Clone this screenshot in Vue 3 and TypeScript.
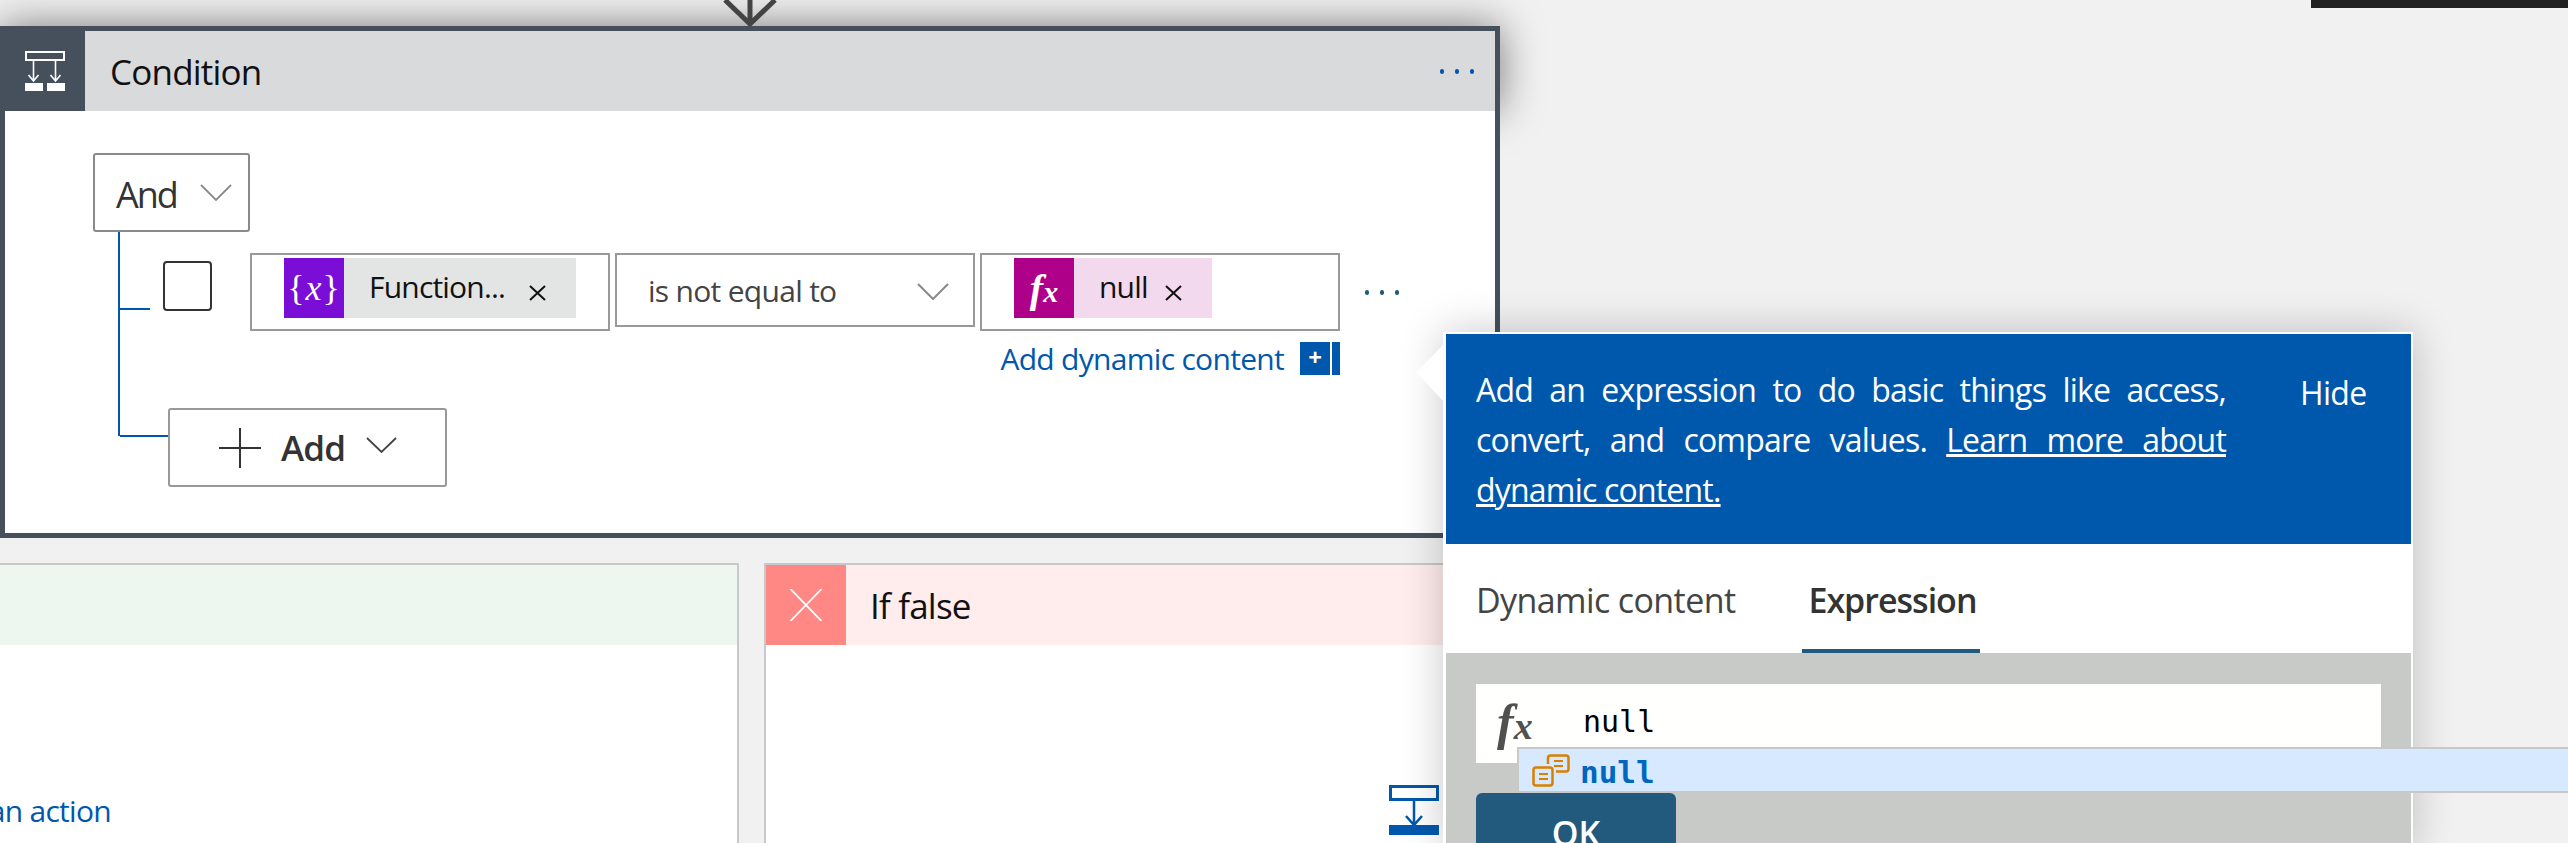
<script setup lang="ts">
const tabs: string[] = ['Dynamic content', 'Expression']
</script>

<template>
  <div class="page">
    <main class="flow">
      <svg class="down" width="60" height="26" viewBox="0 0 60 26">
        <path d="M30 0V24M5 0L30 24L55 0" fill="none" stroke="#444" stroke-width="5" />
      </svg>

      <section class="card">
        <header class="head">
          <div class="head-icon">
            <svg width="40" height="40" viewBox="0 0 40 40">
              <rect x="1" y="1" width="38" height="8" fill="none" stroke="#fff" stroke-width="2" />
              <path d="M8.5 9V30M3.5 24L8.5 30L13.500 24M30.500 9V30M25.500 24L30.500 30L35.500 24" fill="none" stroke="#fff" stroke-width="1.600" />
              <rect x="0" y="32" width="18" height="8" fill="#fff" />
              <rect x="22" y="32" width="18" height="8" fill="#fff" />
            </svg>
          </div>
          <span class="head-title">Condition</span>
          <span class="dots head-dots"><i></i><i></i><i></i></span>
        </header>

        <div class="body">
          <div class="and">
            <span>And</span>
            <svg width="32" height="17" viewBox="0 0 32 17"><path d="M1 1L16 16L31 1" fill="none" stroke="#8a8a8a" stroke-width="1.800" /></svg>
          </div>

          <div class="tree">
            <div class="row">
              <i class="stub"></i>
              <i class="check"></i>
              <div class="field field-a">
                <div class="token token-grey">
                  <span class="tk-icon tk-purple"><span>{<em>x</em>}</span></span>
                  <span class="tk-text tk-fn">Function...</span>
                  <svg class="tk-x" width="17" height="16" viewBox="0 0 17 16"><path d="M1 1L16 15M16 1L1 15" stroke="#111" stroke-width="2" /></svg>
                </div>
              </div>
              <div class="select">
                <span>is not equal to</span>
                <svg width="32" height="17" viewBox="0 0 32 17"><path d="M1 1L16 16L31 1" fill="none" stroke="#8a8a8a" stroke-width="2" /></svg>
              </div>
              <div class="value-col">
                <div class="field field-b">
                  <div class="token token-pink">
                    <span class="tk-icon tk-magenta"><span><em>f</em><em class="fx-x">x</em></span></span>
                    <span class="tk-text tk-null">null</span>
                    <svg class="tk-x" width="17" height="16" viewBox="0 0 17 16"><path d="M1 1L16 15M16 1L1 15" stroke="#111" stroke-width="2" /></svg>
                  </div>
                </div>
                <div class="dyn">
                  <span>Add dynamic content</span>
                  <span class="dyn-plus">+</span>
                  <i class="dyn-bar"></i>
                </div>
              </div>
              <span class="dots row-dots"><i></i><i></i><i></i></span>
            </div>

            <div class="add-row">
              <i class="add-stub"></i>
              <div class="add-btn">
                <svg width="42" height="40" viewBox="0 0 42 40"><path d="M21 0V40M0 20H42" stroke="#333" stroke-width="2" /></svg>
                <span>Add</span>
                <svg width="31" height="16" viewBox="0 0 31 16"><path d="M1 1L15.500 15L30 1" fill="none" stroke="#444" stroke-width="1.800" /></svg>
              </div>
            </div>
          </div>
        </div>
      </section>

      <div class="branches">
        <section class="branch branch-true">
          <div class="branch-head true-head"></div>
          <div class="true-body"><span>Add an action</span></div>
        </section>
        <section class="branch branch-false">
          <div class="branch-head false-head">
            <div class="false-icon">
              <svg width="32" height="32" viewBox="0 0 32 32"><path d="M0.500 0L31.500 32M31.500 0L0.500 32" stroke="#fff" stroke-width="1.800" /></svg>
            </div>
            <span>If false</span>
          </div>
          <div class="false-body">
            <svg width="50" height="50" viewBox="0 0 50 50">
              <rect x="1.500" y="1.500" width="47" height="13" fill="none" stroke="#0058ad" stroke-width="3" />
              <path d="M25 15V39M17 31L25 40L33 31" fill="none" stroke="#0058ad" stroke-width="2.500" />
              <rect x="0" y="40" width="50" height="10" fill="#0058ad" />
            </svg>
          </div>
        </section>
      </div>
    </main>

    <aside class="side"><div class="topbar"></div></aside>

    <div class="popup">
      <svg class="notch" width="30" height="60" viewBox="0 0 30 60"><path d="M30 0L1 29.500L30 60Z" fill="#fff" /></svg>
      <div class="info">
        <p class="info-text">Add an expression to do basic things like access, convert, and compare values. <a>Learn more about dynamic content.</a></p>
        <span class="hide">Hide</span>
      </div>
      <nav class="tabs">
        <span v-for="(t, i) in tabs" :key="t" class="tab" :class="{ active: i === 1 }">{{ t }}</span>
      </nav>
      <div class="panel">
        <div class="expr">
          <span class="expr-fx"><em>f</em><em class="fx-x">x</em></span>
          <span class="expr-text">null</span>
        </div>
        <button class="ok">OK</button>
      </div>
    </div>

    <div class="suggest">
      <svg width="38" height="33" viewBox="0 0 38 33">
        <rect x="1.500" y="13.500" width="19" height="18" rx="2.500" fill="none" stroke="#d98000" stroke-width="2.500" />
        <path d="M7 20H16M7 25H16" stroke="#d98000" stroke-width="2.200" />
        <path d="M16 10V4Q16 1.500 18.500 1.500H34Q36.500 1.500 36.500 4V15Q36.500 17.500 34 17.500H24" fill="none" stroke="#d98000" stroke-width="2.500" />
        <path d="M22 7H31M22 12H31" stroke="#d98000" stroke-width="2.200" />
      </svg>
      <span>null</span>
    </div>
  </div>
</template>

<style>
html, body { margin: 0; background: #f1f1f1; }
</style>

<style scoped>
.page {
  position: relative;
  width: 2568px;
  height: 843px;
  overflow: hidden;
  background: #f1f1f1;
  display: grid;
  grid-template-columns: 1500px 1fr;
  font-family: "Open Sans", "Noto Sans", sans-serif;
  color: #333;
}
.flow { display: flex; flex-direction: column; min-width: 0; }
.side { display: flex; justify-content: flex-end; align-items: flex-start; }
.topbar { width: 257px; height: 8px; background: #222; }

.down { display: block; margin-left: 720px; position: relative; z-index: 2; flex: none; }

.card { flex: none; position: relative; z-index: 1; }
.head {
  position: relative;
  height: 85px;
  box-sizing: border-box;
  border: 5px solid #46505c;
  border-bottom: 0;
  background: #d8dadc;
  display: flex;
  align-items: center;
  box-shadow: 0 0 40px rgba(0, 0, 0, .5);
}
.head-icon {
  width: 80px;
  height: 80px;
  background: #46505c;
  display: flex;
  align-items: center;
  justify-content: center;
  flex: none;
}
.head-title { margin-left: 25px; font-size: 35px; letter-spacing: -.8px; color: #111; flex: 1; }
.dots { display: flex; gap: 11px; }
.dots i { width: 4px; height: 5px; border-radius: 2px; background: currentColor; }
.head-dots { color: #0058ad; margin-right: 21px; }

.body {
  position: relative;
  z-index: 1;
  height: 427px;
  box-sizing: border-box;
  border: 5px solid #46505c;
  border-top: 0;
  background: #fff;
  padding: 42px 0 0 88px;
}
.and {
  width: 157px;
  height: 79px;
  box-sizing: border-box;
  border: 2px solid #8a8a8a;
  border-radius: 3px;
  display: flex;
  align-items: center;
  padding-left: 21px;
  gap: 23px;
  font-size: 36px;
  letter-spacing: -2px;
}
.and span { margin-top: 3px; }
.and svg { margin-top: -1px; }

.tree {
  margin-left: 25px;
  border-left: 2px solid #0058ad;
  height: 204px;
  padding-top: 21px;
  box-sizing: border-box;
}
.row { display: flex; align-items: flex-start; }
.stub { width: 30px; height: 2px; background: #0058ad; margin-top: 55px; flex: none; }
.check {
  width: 49px;
  height: 50px;
  box-sizing: border-box;
  border: 2px solid #333;
  border-radius: 4px;
  margin: 8px 0 0 13px;
  flex: none;
}
.field {
  width: 360px;
  height: 78px;
  box-sizing: border-box;
  border: 2px solid #999;
  padding-top: 3px;
  flex: none;
}
.field-a { margin-left: 38px; padding-left: 32px; }
.field-b { padding-left: 32px; }
.token { height: 60px; display: flex; align-items: center; }
.token-grey { width: 292px; background: #e3e5e5; }
.token-pink { width: 198px; background: #f2d9ee; }
.tk-icon {
  align-self: stretch;
  display: flex;
  align-items: center;
  justify-content: center;
  color: #fff;
  font-family: "Liberation Serif", serif;
  flex: none;
}
.tk-purple { width: 60px; background: #7a0dd6; font-size: 36px; letter-spacing: 1px; }
.tk-magenta { width: 60px; background: #ae0088; font-size: 40px; font-weight: 700; }
.tk-magenta .fx-x { font-size: 30px; }
.tk-text { font-size: 30px; color: #111; letter-spacing: -.8px; margin-top: -3px; }
.tk-fn { margin-left: 25px; width: 160px; flex: none; white-space: nowrap; }
.tk-null { margin-left: 25px; width: 66px; flex: none; }
.tk-x { margin-top: 10px; flex: none; }

.select {
  width: 360px;
  height: 74px;
  box-sizing: border-box;
  border: 2px solid #999;
  margin-left: 5px;
  padding-left: 31px;
  display: flex;
  align-items: center;
  font-size: 30px;
  letter-spacing: -.7px;
  flex: none;
  color: #444;
}
.select span { width: 269px; flex: none; }
.select svg { margin-top: 2px; }
.value-col { margin-left: 5px; width: 360px; flex: none; }
.dyn {
  margin-top: 11px;
  height: 33px;
  display: flex;
  justify-content: flex-end;
  align-items: center;
  color: #0058ad;
  font-size: 30px;
  letter-spacing: -.7px;
}
.dyn-plus {
  width: 30px;
  height: 33px;
  margin-left: 16px;
  background: #0058ad;
  color: #fff;
  font-size: 24px;
  font-weight: 700;
  line-height: 30px;
  text-align: center;
  letter-spacing: 0;
}
.dyn-bar { width: 8px; height: 33px; margin-left: 2px; background: #0058ad; }
.row-dots { color: #1f5a7c; margin: 37px 0 0 25px; }

.add-row { display: flex; align-items: flex-start; margin-top: 33px; }
.add-stub { width: 48px; height: 2px; background: #0058ad; margin-top: 27px; flex: none; }
.add-btn {
  width: 279px;
  height: 79px;
  box-sizing: border-box;
  border: 2px solid #999;
  border-radius: 3px;
  background: #fff;
  display: flex;
  align-items: center;
  padding-left: 49px;
  font-size: 35px;
  font-weight: 600;
  letter-spacing: -.8px;
  flex: none;
}
.add-btn span { margin-left: 20px; }
.add-btn svg:last-child { margin: -6px 0 0 21px; }

.branches { display: flex; gap: 25px; margin-top: 25px; flex: none; }
.branch { flex: none; width: 739px; height: 400px; box-sizing: border-box; background: #fff; border-top: 2px solid #c8c8c8; }
.branch-true { border-right: 2px solid #c8c8c8; }
.branch-false { border-left: 2px solid #c8c8c8; }
.branch-head { height: 80px; display: flex; align-items: center; }
.true-head { background: #edf7ef; }
.false-head { background: #ffecec; font-size: 35px; letter-spacing: -.8px; color: #111; }
.false-icon {
  width: 80px;
  height: 80px;
  margin-right: 24px;
  background: #ff8784;
  display: flex;
  align-items: center;
  justify-content: center;
}
.true-body {
  width: 111px;
  padding-top: 145px;
  display: flex;
  justify-content: flex-end;
  color: #0058ad;
  font-size: 30px;
  letter-spacing: -.7px;
  white-space: nowrap;
}
.false-body { padding: 140px 0 0 623px; }
.false-body svg { display: block; }

.popup {
  position: absolute;
  left: 1443px;
  top: 332px;
  width: 970px;
  height: 520px;
  box-sizing: border-box;
  border: solid #fff;
  border-width: 2px 2px 0 3px;
  background: #fff;
  box-shadow: 0 0 40px rgba(0, 0, 0, .22);
  z-index: 3;
}
.notch { position: absolute; left: -31px; top: 9px; }
.info {
  height: 210px;
  background: #0058ad;
  color: #fff;
  box-sizing: border-box;
  padding: 31px 0 0 30px;
  display: flex;
  font-size: 32px;
}
.info-text {
  width: 750px;
  margin: 0;
  line-height: 50px;
  text-align: justify;
  letter-spacing: -.8px;
  flex: none;
}
.info-text a { text-decoration: underline; }
.hide { margin: 3px 0 0 74px; line-height: 50px; letter-spacing: -.7px; }
.tabs { height: 109px; display: flex; gap: 73px; padding-left: 30px; box-sizing: border-box; font-size: 34px; color: #444; }
.tab { line-height: 112px; height: 109px; letter-spacing: -.6px; position: relative; }
.tab.active { font-weight: 600; color: #333; letter-spacing: -1px; }
.tab.active::after {
  content: "";
  position: absolute;
  left: -6px;
  right: -4px;
  bottom: 0;
  height: 4px;
  background: #215a7c;
}
.panel { background: #c8cac8; height: 400px; padding: 31px 30px; box-sizing: border-box; }
.expr {
  height: 79px;
  background: #fffffd;
  display: flex;
  align-items: flex-start;
}
.expr-fx {
  font-family: "Liberation Serif", serif;
  font-weight: 700;
  font-size: 50px;
  color: #505050;
  margin: 8px 0 0 21px;
  width: 86px;
  line-height: 60px;
  flex: none;
}
.expr-fx .fx-x { font-size: 38px; }
.expr-text { font-family: "DejaVu Sans Mono", monospace; font-size: 30px; color: #000; line-height: 40px; margin-top: 18px; }
.ok {
  display: block;
  margin-top: 30px;
  width: 200px;
  height: 90px;
  border: 0;
  padding: 0 0 10px;
  border-radius: 6px 6px 0 0;
  background: #215a7c;
  color: #fff;
  font: 600 34px "Open Sans", sans-serif;
}

.suggest {
  position: absolute;
  left: 1517px;
  top: 747px;
  right: 0;
  height: 46px;
  box-sizing: border-box;
  border: solid #c8c8c8;
  border-width: 2px 0 2px 2px;
  background: #d6e9fe;
  display: flex;
  align-items: center;
  padding-left: 13px;
  gap: 10px;
  z-index: 4;
}
.suggest span { font-family: "DejaVu Sans Mono", monospace; font-weight: 700; font-size: 31px; margin-top: 3px; color: #0066bf; }
</style>
